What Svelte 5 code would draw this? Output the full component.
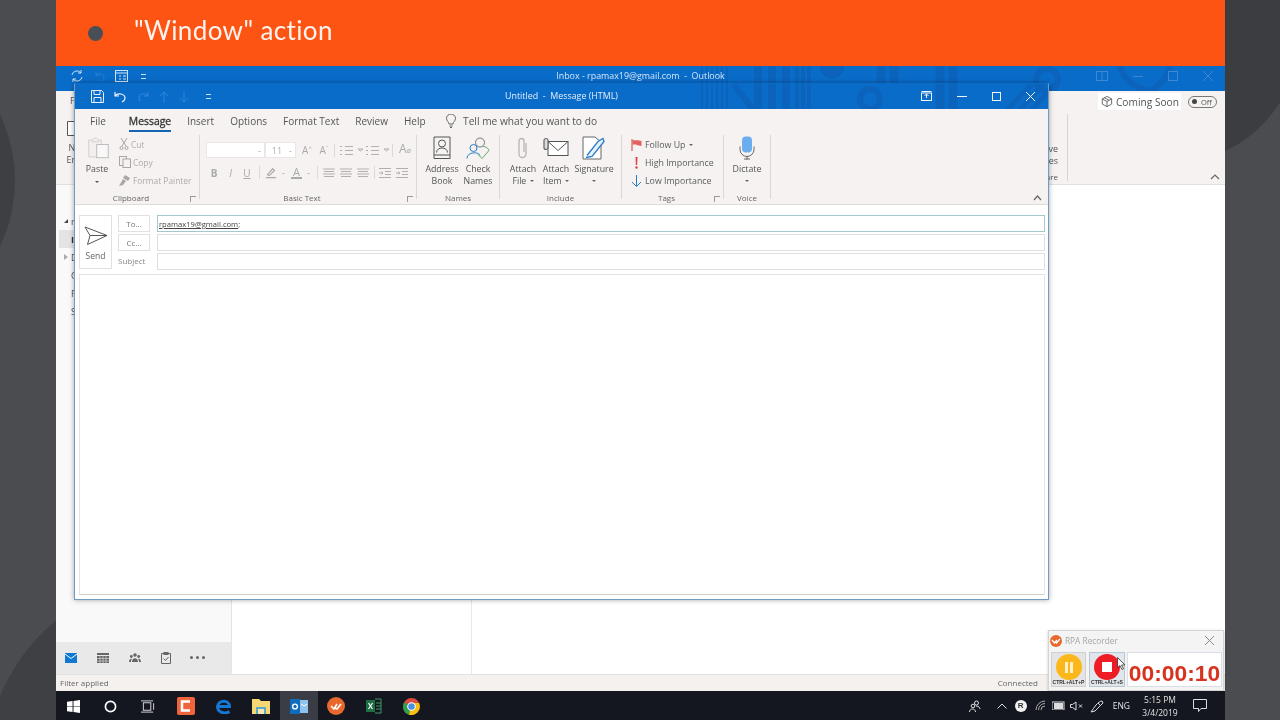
<script>
  const tabs = ['File', 'Message', 'Insert', 'Options', 'Format Text', 'Review', 'Help'];
  const pins = [
    { icon: 'mail', active: true }, { icon: 'cal' }, { icon: 'people' }, { icon: 'task' }, { icon: 'more' }
  ];
</script>

{#snippet pattern()}
  <g fill="none" stroke="#0b63bb">
    <path stroke-width="2" d="M702 66v43M707 66v43M712 66v43M717 66v43M722 66v43M727 66v43"/>
    <path stroke-width="8" d="M758 66v43M772 66v43M786 66v43"/>
    <path stroke-width="4" d="M797 66v43M803 66v43M809 66v43"/>
    <path stroke-width="6" d="M733 84l20 25"/>
    <circle cx="870" cy="99" r="10" stroke-width="6"/>
    <circle cx="832" cy="66" r="12" fill="#0b63bb"/>
    <path stroke-width="9" d="M881 66v18M894 66v18M940 66v44M953 66v44"/>
    <path stroke-width="5" d="M1008 109l24-25M1020 109l24-25M1032 109l24-25"/>
    <circle cx="1047" cy="80" r="11" stroke-width="6"/>
    <path stroke-width="6" d="M1120 66a40 30 0 0 0 30 25M1170 66a60 40 0 0 1-20 25"/>
  </g>
{/snippet}

<div class="desktop">
  <div class="blob blob-a"></div>
  <div class="blob blob-b"></div>
  <div class="blob blob-c"></div>

  <main class="slide">
    <header class="banner">
      <span class="dot"></span>
      <h1>"Window" action</h1>
    </header>

    <section class="outlook">
      <div class="o-title">
        <svg class="o-pattern" viewBox="700 66 525 25" width="525" height="25">{@render pattern()}</svg>
        <div class="o-qat">
          <svg width="14" height="14" viewBox="0 0 14 14" fill="none" stroke="#cfe3f7"><path d="M2 6a5 5 0 0 1 9-2M12 8a5 5 0 0 1-9 2M11 1v3H8M3 13v-3h3"/></svg>
          <svg width="12" height="12" viewBox="0 0 12 12" fill="none" stroke="#2b80d6"><path d="M2 1v4h4M2 5c3-3 8-1 8 3 0 1-1 2-2 3"/></svg>
          <svg width="13" height="12" viewBox="0 0 13 12" fill="none" stroke="#cfe3f7"><rect x=".5" y=".5" width="12" height="11"/><path d="M1 3h11M4 6h2M8 6h3M4 9h2M8 9h3"/></svg>
          <span class="mini-caret"></span>
        </div>
        <div class="o-name">Inbox - rpamax19@gmail.com &nbsp;-&nbsp; Outlook</div>
        <div class="o-controls">
          <svg width="12" height="10" viewBox="0 0 12 10" fill="none" stroke="#3a88d6"><rect x=".5" y=".5" width="11" height="9"/><path d="M6 0v10"/></svg>
          <span class="c-min"></span>
          <svg width="10" height="10" viewBox="0 0 10 10" fill="none" stroke="#3a88d6"><rect x=".5" y=".5" width="9" height="9"/></svg>
          <svg width="10" height="10" viewBox="0 0 10 10" stroke="#3a88d6"><path d="M0 0l10 10M10 0L0 10"/></svg>
        </div>
      </div>

      <div class="o-ribbon">
        <div class="o-left-frag">
          <span class="frag-f">File</span>
          <svg class="frag-icon" width="22" height="15" viewBox="0 0 22 15" fill="#fff" stroke="#555"><path d="M.5.5h21v14H.5z"/></svg>
          <span class="frag-n">New<br />Email</span>
        </div>
        <div class="o-right-side">
          <div class="coming-row">
            <div class="coming">
              <svg width="12" height="13" viewBox="0 0 14 14" fill="none" stroke="#555"><path d="M7 1l5.500 3v6L7 13l-5.500-3V4zM1.500 4L7 7l5.500-3M7 7v6M4 2.600l5.500 3"/></svg>
              <span>Coming Soon</span>
            </div>
            <div class="toggle"><i></i><span>Off</span></div>
          </div>
          <div class="o-frag-group">
            <span class="frag-ve"><span>Move</span><span>Rules</span><span class="frag-lab">Share</span></span>
            <span class="o-sep"></span>
          </div>
          <svg class="o-collapse" width="10" height="6" viewBox="0 0 10 6" fill="none" stroke="#666" stroke-width="1.200"><path d="M1 5l4-4 4 4"/></svg>
        </div>
      </div>

      <div class="o-body">
        <aside class="o-folders">
          <div class="tree">
            <span class="tree-row"><b class="tri-down"></b>rpamax</span>
            <span class="tree-row sel">Inbox</span>
            <span class="tree-row"><b class="tri-right"></b>D</span>
            <span class="tree-row ind">Clutter</span>
            <span class="tree-row ind">Follow Up</span>
            <span class="tree-row ind">Sent Items</span>
          </div>
          <nav class="pins">
            {#each pins as p}
              <span class="pin" class:pin-active={p.active}>
                {#if p.icon === 'mail'}
                  <svg width="12" height="10" viewBox="0 0 12 10"><rect width="12" height="10" fill="#0f78d4"/><path d="M0 1l6 4.500L12 1" fill="none" stroke="#fff"/></svg>
                {:else if p.icon === 'cal'}
                  <svg width="12" height="10" viewBox="0 0 12 10" fill="#666"><path d="M0 0h12v2H0zM0 3h12v7H0z"/><path d="M3 3v7M6 3v7M9 3v7M0 5.500h12M0 8h12" stroke="#e8e8e8" stroke-width=".6"/></svg>
                {:else if p.icon === 'people'}
                  <svg width="12" height="10" viewBox="0 0 12 10" fill="#666"><circle cx="6" cy="2" r="1.800"/><circle cx="2.300" cy="3.500" r="1.400"/><circle cx="9.700" cy="3.500" r="1.400"/><path d="M3 9c0-5 6-5 6 0zM0 9c0-3 2-4 3-3-1 1-1 2-1 3zM12 9c0-3-2-4-3-3 1 1 1 2 1 3z"/></svg>
                {:else if p.icon === 'task'}
                  <svg width="10" height="12" viewBox="0 0 10 12" fill="none" stroke="#666"><path d="M3 1.500H.5v10h9v-10H7"/><rect x="3" y=".5" width="4" height="2" fill="#666"/><path d="M2.500 6.500l2 2 3-3.500"/></svg>
                {:else}
                  <span class="dots"><i></i><i></i><i></i></span>
                {/if}
              </span>
            {/each}
          </nav>
        </aside>
        <div class="o-list"></div>
        <div class="o-read"></div>
      </div>

      <footer class="o-status">
        <span>Filter applied</span>
        <span class="conn">Connected</span>
      </footer>

      <div class="compose">
        <div class="c-title">
          <svg class="c-pattern" viewBox="700 84 348 25" width="348" height="25">{@render pattern()}</svg>
          <div class="c-qat">
            <svg width="13" height="13" viewBox="0 0 13 13" fill="none" stroke="#e8f2fc"><path d="M.5.500h10l2 2v10H.5z"/><path d="M3 .5v4h6v-4M3 12.500V7.500h7v5"/></svg>
            <svg width="13" height="12" viewBox="0 0 13 12" fill="none" stroke="#e8f2fc" stroke-width="1.200"><path d="M1 1v4h4M1 5c3-4 10-2 10 2 0 2-1 3-3 4"/></svg>
            <svg width="12" height="11" viewBox="0 0 12 11" fill="none" stroke="#2f86d9" stroke-width="1.100"><path d="M11 1v4H7M11 5C8 1 2 3 2 7c0 2 1 3 2 3"/></svg>
            <svg width="10" height="12" viewBox="0 0 10 12" fill="none" stroke="#2f86d9"><path d="M5 12V1M1 5l4-4 4 4"/></svg>
            <svg width="10" height="12" viewBox="0 0 10 12" fill="none" stroke="#2f86d9"><path d="M5 0v11M1 7l4 4 4-4"/></svg>
            <span class="mini-caret bright"></span>
          </div>
          <div class="c-name">Untitled &nbsp;-&nbsp; Message (HTML)</div>
          <div class="c-controls">
            <svg width="11" height="10" viewBox="0 0 11 10" fill="none" stroke="#f1f7fd"><rect x=".5" y="2" width="10" height="7.500"/><path d="M5.500 7V3M3.500 5l2-2 2 2M.5 .5h10" /></svg>
            <span class="c-min bright"></span>
            <svg width="9" height="9" viewBox="0 0 9 9" fill="none" stroke="#f1f7fd"><rect x=".5" y=".5" width="8" height="8"/></svg>
            <svg width="9" height="9" viewBox="0 0 9 9" stroke="#f1f7fd"><path d="M0 0l9 9M9 0L0 9"/></svg>
          </div>
        </div>

        <div class="c-tabs">
          {#each tabs as t}
            <span class="tab" class:tab-on={t === 'Message'} class:tab-file={t === 'File'}>{t}</span>
          {/each}
          <span class="tell">
            <svg width="10" height="14" viewBox="0 0 10 14" fill="none" stroke="#666"><path d="M3 10c0-2-2.500-3-2.500-5.500a4.500 4.500 0 0 1 9 0C9.500 7 7 8 7 10zM3.500 12h3M4 13.500h2"/></svg>
            Tell me what you want to do
          </span>
        </div>

        <div class="c-ribbon">
          <div class="grp g-clip">
            <div class="grp-main">
              <div class="big paste">
                <svg width="23" height="24" viewBox="0 0 26 24" fill="#f2efee" stroke="#cfcccb"><path d="M2 3h14v19H2z"/><path d="M6 3l2-2h3l2 2v2H6z"/><rect x="11" y="8" width="13" height="15" fill="#f9f8f8" stroke="#b9b6b5"/></svg>
                <span class="l">Paste</span>
                <span class="caret"></span>
              </div>
              <div class="small-col dim">
                <span class="si"><svg width="10" height="12" viewBox="0 0 10 12" fill="none" stroke="#a9a6a6"><path d="M2 0l5 8M8 0L3 8"/><circle cx="2.500" cy="10" r="1.500"/><circle cx="7.500" cy="10" r="1.500"/></svg>Cut</span>
                <span class="si"><svg width="12" height="12" viewBox="0 0 12 12" fill="#f5f2f1" stroke="#a9a6a6"><rect x=".5" y=".5" width="7" height="9"/><rect x="4" y="3" width="7.500" height="8.500"/></svg>Copy</span>
                <span class="si fmt"><svg width="13" height="11" viewBox="0 0 13 11" fill="#a9a6a6"><path d="M7 0l5 3-2 3-5-3zM5 4l3 2-3 4-4 1z"/></svg>Format Painter</span>
              </div>
            </div>
            <span class="grp-label has-launch">Clipboard</span>
            <span class="launcher"></span>
          </div>

          <div class="grp g-text">
            <div class="text-rows">
              <div class="row r1">
                <span class="combo font"><i>-</i></span>
                <span class="combo size"><em>11</em><i>-</i></span>
                <span class="glyph g-a">A<sup>^</sup></span>
                <span class="glyph g-a2">A<sup>ˇ</sup></span>
                <span class="vbar v1"></span>
                <svg class="lines l-b" width="24" height="11" viewBox="0 0 24 11" stroke="#b2afae" fill="none"><path d="M5 1.500h8M5 5.500h8M5 9.500h8M0 1.500h2M0 5.500h2M0 9.500h2M18 4h5l-2.500 2z"/></svg>
                <svg class="lines l-n" width="24" height="11" viewBox="0 0 24 11" stroke="#b2afae" fill="none"><path d="M5 1.500h8M5 5.500h8M5 9.500h8M0 1.500h2M0 5.500h2M0 9.500h2M18 4h5l-2.500 2z"/></svg>
                <span class="vbar v1b"></span>
                <span class="glyph g-ap">A<small>ø</small></span>
              </div>
              <div class="row r2">
                <b class="fx fb">B</b><i class="fx fi">I</i><u class="fx fb">U</u>
                <span class="vbar v2"></span>
                <span class="colorbtn"><svg width="12" height="12" viewBox="0 0 14 12" fill="none" stroke="#aaa"><path d="M3 8l6-7 2 2-6 6zM1 11.500h12" stroke-width="1.400"/></svg><i>-</i></span>
                <span class="colorbtn"><span class="under-a">A</span><i>-</i></span>
                <span class="vbar v3"></span>
                {#each [0, 1, 2] as n}
                  <svg class="al" width="12" height="10" viewBox="0 0 12 10" stroke="#b2afae"><path d="M0 1h12M1 3.500h10M0 6h12M1 8.500h10"/></svg>
                {/each}
                <span class="vbar v4"></span>
                {#each [0, 1] as n}
                  <svg class="ind-i" width="12" height="10" viewBox="0 0 12 10" stroke="#b2afae" fill="none"><path d="M0 .5h12M6 3.500h6M6 6.500h6M0 9.500h12M0 5h4M2.500 3.500L4 5 2.500 6.500"/></svg>
                {/each}
              </div>
            </div>
            <span class="grp-label has-launch">Basic Text</span>
            <span class="launcher"></span>
          </div>

          <div class="grp g-names">
            <div class="grp-main">
              <div class="big w36">
                <svg width="18" height="23" viewBox="0 0 18 23" fill="none" stroke="#555"><path d="M1 .5h16v18H1zM1 18.500v3.500h16v-3.500"/><circle cx="9" cy="7" r="3.500"/><path d="M3.500 16c0-6 11-6 11 0"/></svg>
                <span class="l">Address<br />Book</span>
              </div>
              <div class="big w36">
                <svg width="26" height="23" viewBox="0 0 26 23" fill="none"><circle cx="15" cy="6" r="4.500" stroke="#777"/><circle cx="8.500" cy="11.500" r="3.500" stroke="#2b7cc7"/><path d="M2 22c0-7 12-7 13-3" stroke="#2b7cc7"/><path d="M13 18l4 4 7-8c-1-3-4-4-6-4" stroke="#5eae6a"/></svg>
                <span class="l">Check<br />Names</span>
              </div>
            </div>
            <span class="grp-label">Names</span>
          </div>

          <div class="grp g-incl">
            <div class="grp-main">
              <div class="big w34">
                <svg width="12" height="22" viewBox="0 0 12 22" fill="none" stroke="#b8b5b4" stroke-width="1.300"><path d="M9 6v11a3.500 3.500 0 0 1-7 0V4a2.500 2.500 0 0 1 5 0v11"/></svg>
                <span class="l">Attach<br />File <i class="ic"></i></span>
              </div>
              <div class="big w32">
                <svg width="26" height="23" viewBox="0 0 26 23" fill="none"><rect x="5" y="5" width="20" height="14" fill="#fff" stroke="#555"/><path d="M5 5l10 9 10-9" stroke="#555"/><path d="M5 11V4a1.800 1.800 0 0 0-4 0v7a2 2 0 0 0 4 0" stroke="#666" stroke-width="1.200" fill="#ddd"/></svg>
                <span class="l">Attach<br />Item <i class="ic"></i></span>
              </div>
              <div class="big w44">
                <svg width="24" height="23" viewBox="0 0 24 23" fill="none"><path d="M1 .5h12l6 5v17H1z" fill="#fff" stroke="#666"/><path d="M5 19l11-14 5-3 1 3-12 15-6 1" fill="#e6f2fb" stroke="#2b7cc7" stroke-width="1.300"/></svg>
                <span class="l">Signature<br /><i class="ic"></i></span>
              </div>
            </div>
            <span class="grp-label">Include</span>
          </div>

          <div class="grp g-tags">
            <div class="tag-col">
              <span class="si"><svg width="11" height="12" viewBox="0 0 11 12"><path d="M1 0v12" stroke="#d13a3a"/><path d="M1.500 1l4 .6V1l5 1v5l-5-1v-.6h-4z" fill="#e36060"/></svg>Follow Up <i class="ic"></i></span>
              <span class="si"><svg width="11" height="12" viewBox="0 0 11 12" fill="#e0403c"><path d="M4.500 0h2l-.4 8h-1.200z"/><circle cx="5.500" cy="10.500" r="1.200"/></svg>High Importance</span>
              <span class="si"><svg width="11" height="12" viewBox="0 0 11 12" fill="none" stroke="#2b7cc7"><path d="M5.500 0v11M1 7l4.500 4.500L10 7"/></svg>Low Importance</span>
            </div>
            <span class="grp-label has-launch">Tags</span>
            <span class="launcher"></span>
          </div>

          <div class="grp g-voice">
            <div class="grp-main">
              <div class="big w47">
                <svg width="16" height="23" viewBox="0 0 16 23" fill="none"><rect x="3" y="0" width="10" height="16" rx="4" fill="#6aaef0"/><path d="M1 10v3a7 7 0 0 0 14 0v-3M8 20v3M5 22.500h6" stroke="#666"/></svg>
                <span class="l">Dictate<br /><i class="ic"></i></span>
              </div>
            </div>
            <span class="grp-label">Voice</span>
          </div>

          <svg class="c-collapse" width="9" height="6" viewBox="0 0 9 6" fill="none" stroke="#666" stroke-width="1.200"><path d="M1 5l3.500-4L8 5"/></svg>
        </div>

        <div class="c-form">
          <button class="send">
            <svg width="24" height="20" viewBox="0 0 24 20" fill="none" stroke="#555"><path d="M1 1l22 8.500L3.500 18.500 6 9.500zM6 9.500h17"/></svg>
            <span>Send</span>
          </button>
          <div class="fields">
            <div class="f-row"><span class="f-btn">To...</span><span class="f-input f-on"><u>rpamax19@gmail.com</u>;</span></div>
            <div class="f-row"><span class="f-btn">Cc...</span><span class="f-input"></span></div>
            <div class="f-row"><span class="f-lab">Subject</span><span class="f-input"></span></div>
          </div>
        </div>
        <div class="c-editor"></div>
      </div>

      <aside class="rec">
        <div class="rec-title">
          <span class="rec-logo"><svg width="12" height="12" viewBox="0 0 12 12" fill="none" stroke="#fff" stroke-width="1.400"><path d="M2 5l2.500 3L7 5M5 6.500l1.500 1.500L10 4"/></svg></span>
          <span class="rec-name">RPA Recorder</span>
          <svg width="9" height="9" viewBox="0 0 9 9" stroke="#888"><path d="M0 0l9 9M9 0L0 9"/></svg>
        </div>
        <div class="rec-body">
          <div class="rec-btn pause-b">
            <span class="disc amber"><i></i><i></i></span>
            <small>CTRL+ALT+P</small>
          </div>
          <div class="rec-btn stop-b">
            <span class="disc red"><em></em></span>
            <small>CTRL+ALT+S</small>
            <svg class="cursor" width="9" height="13" viewBox="0 0 9 13"><path d="M.5.500v10l2.500-2 2 4 1.500-.8-2-3.700h3.500z" fill="#fff" stroke="#333" stroke-width=".8"/></svg>
          </div>
          <div class="timer">00:00:10</div>
        </div>
      </aside>
    </section>

    <div class="taskbar">
      <div class="tb-left">
        <span class="tb"><svg width="13" height="13" viewBox="0 0 14 14" fill="#fff"><path d="M0 2l6-.9V6.600H0zM7 1l7-1v6.600H7zM0 7.400h6v5.500l-6-.9zM7 7.400h7V14l-7-1z"/></svg></span>
        <span class="tb"><svg width="13" height="13" viewBox="0 0 14 14" fill="none" stroke="#fff" stroke-width="1.800"><circle cx="7" cy="7" r="5.500"/></svg></span>
        <span class="tb"><svg width="14" height="13" viewBox="0 0 15 13" fill="none" stroke="#ddd"><rect x="2.500" y="2.500" width="8" height="8"/><path d="M0 .5h13M0 12.500h13M13.500 3v7" /></svg></span>
        <span class="tb"><svg width="18" height="18" viewBox="0 0 18 18"><rect width="18" height="18" rx="2" fill="#f0643c"/><path d="M13 4.500H5v9h8" fill="none" stroke="#fff" stroke-width="2.500"/></svg></span>
        <span class="tb"><svg width="16" height="16" viewBox="0 0 16 16" fill="none" stroke="#1478d4" stroke-width="3"><path d="M3 8.500h10.500c0-7-11-7-12 0 0 6 7 8 12 5"/></svg></span>
        <span class="tb"><svg width="18" height="16" viewBox="0 0 18 16"><path d="M0 1h7l2 2h9v13H0z" fill="#f7d774"/><rect x="4" y="9" width="10" height="7" fill="#5da7c9"/><rect x="6" y="11" width="6" height="5" fill="#fbe9ac"/></svg></span>
        <span class="tb tb-active"><svg width="18" height="15" viewBox="0 0 18 15"><rect x="7" y="1" width="11" height="13" fill="#8fc4ee"/><path d="M11 5l3 2 3-2" stroke="#fff" fill="none"/><rect width="10" height="15" fill="#0f6cbd"/><circle cx="5" cy="7.500" r="2.400" fill="none" stroke="#fff" stroke-width="1.400"/></svg></span>
        <span class="tb"><svg width="18" height="18" viewBox="0 0 18 18"><circle cx="9" cy="9" r="9" fill="#e8682e"/><path d="M4 9l3 3 3-5M8 11l2 1 4-5" fill="none" stroke="#fff" stroke-width="1.600"/></svg></span>
        <span class="tb"><svg width="16" height="16" viewBox="0 0 16 16"><path d="M9 1h6v14H9" fill="none" stroke="#3d9a63"/><path d="M10 5h5M10 8h5M10 11h5" stroke="#3d9a63"/><rect y="2" width="9" height="12" fill="#1c7044"/><path d="M2.500 5l4 6M6.500 5l-4 6" stroke="#fff" stroke-width="1.200"/></svg></span>
        <span class="tb"><svg width="17" height="17" viewBox="0 0 17 17"><circle cx="8.500" cy="8.500" r="8.500" fill="#dd4b3e"/><path d="M8.500 8.500L1.200 4.300A8.500 8.500 0 0 0 6 16.700z" fill="#2f9e4f"/><path d="M8.500 5h7.500A8.500 8.500 0 0 1 6 16.700z" fill="#f4c20d"/><circle cx="8.500" cy="8.500" r="3.800" fill="#4a8fe7" stroke="#fff" stroke-width="1.100"/></svg></span>
      </div>
      <div class="tray">
        <svg class="t-people" width="12" height="12" viewBox="0 0 12 12" fill="none" stroke="#ddd"><circle cx="7.500" cy="3" r="2"/><circle cx="4" cy="6" r="1.800"/><path d="M.5 12c0-4 6-4 6 0M7 6c3 0 4 2 4 3"/></svg>
        <svg class="t-chev" width="10" height="6" viewBox="0 0 10 6" fill="none" stroke="#ddd"><path d="M.5 5.500L5 1l4.500 4.500"/></svg>
        <span class="t-r">R</span>
        <svg class="t-wifi" width="11" height="11" viewBox="0 0 11 11" fill="none" stroke="#aaa"><path d="M1 10a9 9 0 0 1 9-9M3.500 10A6.500 6.500 0 0 1 10 3.500M6 10a4 4 0 0 1 4-4"/></svg>
        <svg class="t-batt" width="13" height="9" viewBox="0 0 13 9"><rect x="0" y="1" width="12" height="8" fill="none" stroke="#ddd"/><rect x="2" y="2" width="9" height="6" fill="#ddd"/></svg>
        <svg class="t-vol" width="13" height="10" viewBox="0 0 13 10" fill="none" stroke="#ddd"><path d="M.5 3.500h2L6 1v8L2.500 6.500h-2zM9 3.500l3 3M12 3.500l-3 3"/></svg>
        <svg class="t-pen" width="14" height="14" viewBox="0 0 14 14" fill="none" stroke="#ddd"><path d="M1 13c2-2 3-5 5-7s4-4 6-4l1 2-8 8zM8 4l2 2"/></svg>
        <span class="t-eng">ENG</span>
        <span class="t-clock">5:15 PM<br />3/4/2019</span>
        <svg class="t-note" width="14" height="13" viewBox="0 0 14 13" fill="none" stroke="#ddd"><path d="M.5.500h13v9H8l-2.500 3V9.500h-5z"/></svg>
      </div>
    </div>
  </main>
</div>

<style>
  :global(body) { margin: 0; background: #4b4c50; }
  .desktop { position: relative; width: 1280px; height: 720px; overflow: hidden; background: #4b4c50; font-family: "Open Sans", "Noto Sans", sans-serif; filter: blur(.45px); }
  .blob { position: absolute; border-radius: 50%; background: #3e3f43; }
  .blob-a { left: -290px; top: 28px; width: 305px; height: 305px; }
  .blob-b { left: -15px; top: 576px; width: 390px; height: 390px; background: #3f4044; }
  .blob-c { left: 1072px; top: -158px; width: 236px; height: 316px; background: #3c3d41; }
  .slide { position: relative; width: 1169px; height: 720px; margin-left: 56px; display: flex; flex-direction: column; }

  .banner { height: 66px; flex: none; background: #fe5413; display: flex; align-items: center; padding-left: 32px; box-sizing: border-box; }
  .dot { width: 15px; height: 15px; border-radius: 50%; background: #4a4e57; margin-right: 31px; }
  h1 { margin: 0; color: #fdf3ee; font: 400 26px/1 "Lato", sans-serif; letter-spacing: .38px; position: relative; top: -3px; }

  .outlook { position: relative; flex: 1; display: flex; flex-direction: column; background: #fff; min-height: 0; }
  .o-title { position: relative; height: 25px; background: #0a6cc9; display: flex; align-items: center; color: #d5e6f7; font-size: 8.900px; flex: none; overflow: hidden; }
  .o-pattern { position: absolute; right: 0; top: 0; }
  .o-qat { position: relative; display: flex; align-items: center; gap: 9.500px; padding: 0 0 5px 14px; width: 200px; box-sizing: border-box; }
  .mini-caret { width: 5px; height: 3px; border-bottom: 1px solid #cfe3f7; border-top: 1px solid #cfe3f7; margin-left: 3px; }
  .mini-caret.bright { margin-left: 7px; }
  .o-name { position: absolute; left: 0; right: 0; top: 3px; text-align: center; }
  .o-controls { position: absolute; right: 12px; top: 5px; display: flex; align-items: center; gap: 25px; }
  .c-min { width: 10px; height: 1px; background: #3a88d6; }
  .c-min.bright { background: #f1f7fd; }

  .o-ribbon { height: 94px; background: #f5f2f1; flex: none; position: relative; display: flex; justify-content: space-between; border-bottom: 1px solid #e2e0df; box-sizing: border-box; color: #555; font-size: 9px; }
  .o-left-frag { width: 18px; padding-top: 4px; display: flex; flex-direction: column; align-items: flex-start; box-sizing: border-box; line-height: 12px; }
  .frag-f { margin-left: 14px; }
  .frag-icon { margin: 14px 0 0 11px; flex: none; }
  .frag-n { margin: 6px 0 0 10px; width: 24px; text-align: center; }
  .o-right-side { width: 176px; display: flex; flex-direction: column; position: relative; }
  .coming-row { display: flex; align-items: center; gap: 7px; height: 21px; padding-left: 49px; flex: none; }
  .coming { background: #fff; display: flex; align-items: center; gap: 3px; padding: 0 2px 0 3px; height: 17px; width: 83px; box-sizing: border-box; font-size: 10.200px; color: #555; white-space: nowrap; }
  .toggle { width: 29px; height: 12px; border: 1px solid #777; border-radius: 7px; display: flex; align-items: center; gap: 4px; box-sizing: border-box; font-size: 7.500px; color: #555; }
  .toggle i { width: 5px; height: 5px; background: #444; border-radius: 50%; margin-left: 3px; }
  .o-frag-group { display: flex; font-size: 9px; line-height: 12px; margin-top: 2px; }
  .frag-ve { width: 9px; display: flex; flex-direction: column; align-items: flex-end; padding-top: 29px; white-space: nowrap; box-sizing: content-box; }
  .frag-lab { font-size: 8px; margin-top: 4px; }
  .o-sep { width: 1px; height: 67px; background: #d6d3d2; margin-left: 9px; }
  .o-collapse { position: absolute; right: 5px; bottom: 4px; }

  .o-body { flex: 1; display: flex; min-height: 0; }
  .o-folders { width: 176px; flex: none; border-right: 1px solid #e4e4e4; display: flex; flex-direction: column; justify-content: space-between; box-sizing: border-box; background: #f9f9f9; }
  .tree { display: flex; flex-direction: column; padding-top: 27px; font-size: 9px; color: #555; }
  .tree-row { height: 18px; display: flex; align-items: center; padding-left: 8px; box-sizing: border-box; gap: 3px; white-space: nowrap; }
  .tree-row.sel { background: #e4e4e4; margin-left: 3px; padding-left: 12px; font-weight: 700; color: #333; }
  .tree-row.ind { padding-left: 15px; }
  .tri-down { border-left: 4px solid transparent; border-bottom: 4px solid #444; flex: none; }
  .tri-right { border-left: 4px solid #aaa; border-top: 3px solid transparent; border-bottom: 3px solid transparent; flex: none; }
  .pins { height: 32px; background: #e9e9e9; display: flex; align-items: center; padding-bottom: 1px; box-sizing: border-box; }
  .pin { width: 31.600px; display: flex; justify-content: center; align-items: center; height: 31px; position: relative; left: -.4px; }
  .dots { display: flex; gap: 3px; }
  .dots i { width: 3px; height: 3px; border-radius: 50%; background: #666; }
  .o-list { width: 240px; flex: none; border-right: 1px solid #e8e8e8; box-sizing: border-box; }
  .o-read { flex: 1; }
  .o-status { height: 17px; flex: none; background: #f4f1ef; border-top: 1px solid #e4e2e1; display: flex; justify-content: space-between; align-items: center; padding: 0 187px 1px 4px; font-size: 8px; color: #666; box-sizing: border-box; }

  .compose { position: absolute; left: 18px; top: 17px; width: 975px; height: 517px; background: #fff; border: 1px solid #6f9cc4; border-top-color: #0a6cc9; box-sizing: border-box; box-shadow: 0 0 5px rgba(0,0,0,.35); display: flex; flex-direction: column; }
  .c-title { height: 25px; flex: none; background: #0a6cc9; position: relative; display: flex; align-items: center; color: #e3eefa; font-size: 8.900px; overflow: hidden; }
  .c-pattern { position: absolute; right: 0; top: 0; }
  .c-qat { position: relative; display: flex; align-items: center; gap: 10px; padding-left: 16px; }
  .c-name { position: absolute; left: 0; right: 0; text-align: center; top: 5px; }
  .c-controls { position: absolute; right: 13px; top: 7px; display: flex; align-items: center; gap: 25px; }
  .c-tabs { height: 24px; flex: none; background: #f5f2f1; display: flex; align-items: center; padding-left: 15px; gap: 16px; color: #555; font-size: 10px; }
  .tab { padding: 3px 0 2px; border-bottom: 2px solid transparent; }
  .tab-file { margin-right: 7px; }
  .tab-on { color: #333; border-bottom-color: #1565b5; -webkit-text-stroke: .3px #333; font-size: 10.400px; }
  .tell { display: flex; align-items: center; gap: 7px; margin-left: 4.500px; font-size: 10.200px; }
  .c-ribbon { height: 72px; flex: none; background: #f5f2f1; display: flex; border-bottom: 1px solid #dedcdb; position: relative; box-sizing: border-box; color: #666; font-size: 8.800px; }
  .grp { position: relative; border-right: 1px solid #d9d6d5; margin: 2px 0 5px; box-sizing: border-box; height: 64px; }
  .grp-main { display: flex; }
  .grp-label { position: absolute; left: 0; right: 0; bottom: -4px; text-align: center; font-size: 8px; line-height: 11px; color: #666; }
  .grp-label.has-launch { right: 12px; }
  .launcher { position: absolute; right: 3px; bottom: -3px; width: 5px; height: 5px; border-left: 1px solid #999; border-top: 1px solid #999; }
  .g-clip { width: 125px; }
  .g-clip .grp-main { padding-left: 10px; }
  .g-text { width: 217px; }
  .g-names { width: 83px; padding-left: 7px; }
  .g-incl { width: 122px; padding-left: 6px; }
  .g-tags { width: 102px; }
  .g-voice { width: 47px; }
  .big { display: flex; flex-direction: column; align-items: center; text-align: center; line-height: 12px; color: #555; }
  .big svg { height: 24px; margin: 1px 0 3px; flex: none; }
  .big .l { display: block; }
  .paste { width: 24px; margin-right: 10px; }
  .paste svg { margin-left: 3px; }
  .w36 { width: 36px; } .w34 { width: 34px; } .w32 { width: 32px; } .w44 { width: 44px; } .w47 { width: 46px; }
  .caret { width: 0; height: 0; border: 2px solid transparent; border-top-color: #555; margin-top: 6px; }
  .ic { display: inline-block; width: 0; height: 0; border: 2px solid transparent; border-top-color: #666; border-bottom: 0; vertical-align: 2px; margin-left: 1px; }
  .small-col { display: flex; flex-direction: column; gap: 4px; padding-top: 2px; font-size: 8.400px; }
  .si { display: flex; align-items: center; gap: 2px; height: 14px; white-space: nowrap; }
  .dim { color: #adaaaa; }
  .fmt { margin-left: -1px; }
  .text-rows { padding: 7px 0 0 6px; color: #b2afae; }
  .row { display: flex; align-items: center; }
  .r1 { height: 16px; }
  .r2 { height: 15px; margin-top: 7px; }
  .combo { background: #fff; height: 16px; display: flex; justify-content: flex-end; align-items: center; box-sizing: border-box; font-size: 9px; padding-right: 3px; gap: 7px; border: 1px solid #eae7e6; }
  .combo i, .colorbtn i { font-style: normal; color: #aaa; font-size: 9px; }
  .combo em { font-style: normal; }
  .font { width: 59px; }
  .size { width: 31px; }
  .glyph { font-size: 10px; width: 14px; text-align: center; color: #aaa; line-height: 12px; white-space: nowrap; }
  .glyph sup { font-size: 6px; line-height: 0; }
  .g-a { margin-left: 4px; }
  .g-a2 { margin-left: 3px; }
  .g-ap { margin-left: 5px; font-size: 12px; }
  .g-ap small { font-size: 7px; }
  .vbar { width: 1px; height: 13px; background: #dcd9d8; flex: none; }
  .v1 { margin-left: 3px; }
  .v1b { margin-left: 2px; }
  .lines { flex: none; }
  .l-b { margin-left: 5px; }
  .l-n { margin-left: 2px; }
  .fx { text-align: center; font-size: 10px; color: #aaa; font-style: normal; }
  .fb { width: 16px; }
  .fi { width: 17px; font-style: italic; }
  .v2 { margin: 0 5px 0 4px; }
  .colorbtn { display: flex; align-items: center; gap: 5px; width: 26px; flex: none; }
  .under-a { font-size: 11px; line-height: 11px; border-bottom: 2px solid #aaa; padding: 0 2px; color: #aaa; }
  .v3 { margin-right: 5px; }
  .al { margin-right: 5px; flex: none; }
  .v4 { margin-right: 4px; }
  .ind-i { margin-right: 5px; flex: none; }
  .tag-col { display: flex; flex-direction: column; gap: 4px; padding: 3px 0 0 9px; color: #5c5c5c; }
  .tag-col .si { gap: 3px; }
  .c-collapse { position: absolute; right: 6px; bottom: 3px; }

  .c-form { display: flex; flex: none; padding: 10px 3px 0 4px; gap: 6px; height: 69px; box-sizing: border-box; }
  .send { width: 33px; height: 54px; background: #fff; border: 1px solid #e1e1e1; padding: 10px 0 0; display: flex; flex-direction: column; align-items: center; gap: 4px; font: 8.500px "Open Sans", sans-serif; color: #666; box-sizing: border-box; }
  .fields { flex: 1; display: flex; flex-direction: column; gap: 2px; }
  .f-row { display: flex; gap: 7px; height: 17px; }
  .f-btn { width: 32px; border: 1px solid #e1e1e1; background: #fff; font-size: 8px; color: #777; text-align: center; box-sizing: border-box; line-height: 15px; }
  .f-lab { width: 32px; font-size: 8px; color: #888; line-height: 16px; white-space: nowrap; }
  .f-input { flex: 1; border: 1px solid #dfdfdf; font-size: 7.600px; color: #444; line-height: 16px; padding-left: 1px; white-space: nowrap; box-sizing: border-box; }
  .f-on { border-color: #a3c8d0; }
  .c-editor { flex: 1; margin: 0 3px 4px 4px; border: 1px solid #e3e3e3; border-bottom: 1px solid #d0d0d0; }

  .rec { position: absolute; left: 992px; top: 564px; width: 176px; height: 61px; background: #f4f4f4; border: 1px solid #d4d4d4; box-sizing: border-box; box-shadow: 0 1px 3px rgba(0,0,0,.2); display: flex; flex-direction: column; }
  .rec-title { height: 21px; flex: none; display: flex; align-items: center; padding: 0 9px 2px 1px; gap: 3px; color: #a5a5a5; font-size: 8.300px; box-sizing: border-box; }
  .rec-logo { width: 12px; height: 12px; border-radius: 50%; background: #e8682e; display: block; flex: none; }
  .rec-logo svg { display: block; }
  .rec-name { flex: 1; }
  .rec-body { display: flex; gap: 3px; padding-left: 2px; }
  .rec-btn { position: relative; width: 35px; height: 35px; background: #e4e4e4; border: 1px solid #d0d0d0; box-sizing: border-box; display: flex; flex-direction: column; align-items: center; }
  .stop-b { background: #e0e6ec; border-color: #b9c6d3; width: 36px; }
  .rec-btn small { font: 700 5px/6px "Liberation Sans", sans-serif; color: #333; white-space: nowrap; position: absolute; bottom: 1px; }
  .disc { width: 26px; height: 26px; border-radius: 50%; display: flex; justify-content: center; align-items: center; gap: 2px; margin-top: 1px; flex: none; }
  .amber { background: #fcb81a; }
  .amber i { width: 3px; height: 11px; background: #fdf0cc; }
  .red { background: #ee1c25; }
  .red em { width: 10px; height: 10px; background: #fff; }
  .cursor { position: absolute; left: 27px; top: 4px; }
  .timer { width: 95px; height: 35px; margin-left: -1px; background: #fff; border: 1px solid #d8dfe6; box-sizing: border-box; color: #d8331f; font: 700 22.800px/41px "Liberation Sans", sans-serif; text-align: center; white-space: nowrap; overflow: hidden; }

  .taskbar { height: 29px; flex: none; background: #141720; display: flex; justify-content: space-between; align-items: center; color: #e2e2e2; position: relative; }
  .tb-left { display: flex; height: 100%; margin-left: -1.500px; }
  .tb { width: 37.600px; height: 29px; padding-top: 1px; box-sizing: border-box; display: flex; align-items: center; justify-content: center; }
  .tb-active { background: #3a3d45; }
  .tray { display: flex; align-items: center; height: 100%; font-size: 8.500px; padding-right: 18px; }
  .t-people { margin-right: 16px; }
  .t-chev { margin-right: 8px; }
  .t-r { width: 12px; height: 12px; border-radius: 50%; background: #f2f2f2; color: #333; font: 700 8px/12px "Liberation Sans", sans-serif; text-align: center; margin-right: 8px; }
  .t-wifi { margin-right: 6px; }
  .t-batt { margin-right: 5px; }
  .t-vol { margin-right: 7px; }
  .t-pen { margin-right: 9px; }
  .t-eng { margin-right: 11px; }
  .t-clock { text-align: center; line-height: 13px; margin-right: 14px; width: 38px; white-space: nowrap; }
</style>
